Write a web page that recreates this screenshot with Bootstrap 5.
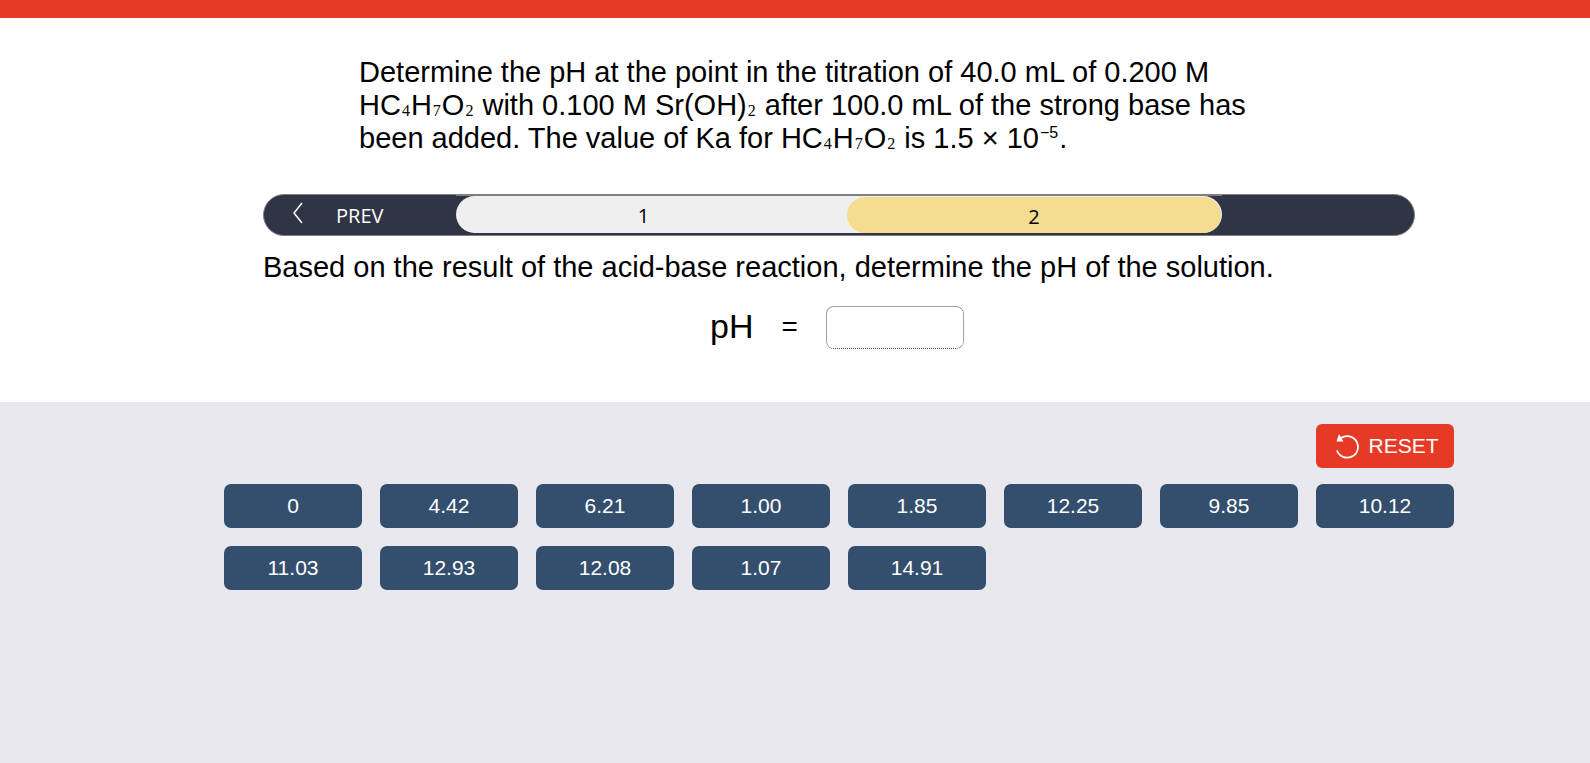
<!DOCTYPE html>
<html lang="en">
<head>
<meta charset="utf-8">
<meta name="viewport" content="width=device-width, initial-scale=1">
<title>Titration pH</title>
<link href="https://cdn.jsdelivr.net/npm/bootstrap@5.3.0/dist/css/bootstrap.min.css" rel="stylesheet">
<style>
body { font-family: "Liberation Sans", Arial, sans-serif; color: #000; background: #fff; }
.top-strip { height: 18px; background: #e63a27; }
.shifted { padding-left: 88px; }
.step-area { max-width: 1152px; }
.question { font-size: 29px; line-height: 33px; padding: 38px 140px 0 96px; margin-bottom: 39px; }
.question sub { font-family: "Liberation Serif", serif; font-size: 16px; line-height: 0; bottom: -1px; padding: 0 1px; }
.question sup { font-size: 16px; line-height: 0; top: -10px; padding: 0 1px; }
.stepper { height: 42px; border: 1px solid #808080; border-radius: 21px; background: #303545; font: 20px "Open Sans", sans-serif; overflow: hidden; }
.stepper button { border: 0; padding: 2px 0 0; font: inherit; background: none; }
.stepper .prev-step { flex: 0 0 192px; padding-top: 4px; color: #fff; text-align: left; }
.prev-step svg { margin: 0 32px 8px 28px; }
.track { flex: 0 0 766px; height: 40px; padding-bottom: 2px; border-top: 1px solid #808080; background: #303545; }
.track-fill { background: #efefef; border-radius: 19px; }
.stepper .step-one { padding-right: 16px; }
.stepper .step-two { flex: 0 0 374px; margin: 1px 1px 0 0; border-radius: 19px; background: #f5dd90; }
.prompt { font-size: 29px; line-height: 33px; margin: 15px 0 22px; }
.equation { gap: 28px; font-size: 34px; line-height: 41px; margin-bottom: 53px; padding-right: 4px; }
.equation label, .equals { padding-bottom: 2px; }
.equals { font-size: 28px; }
.answer { width: 138px; height: 43px; border: 1px dotted #344e6e; border-radius: 8px; font-size: 22px; text-align: center; }
.answer { border-top: 1px solid #95a5ba; border-left: 1px solid #95a5ba; }
.tray { background: #e9e8ee; padding-top: 22px; padding-bottom: 22px; }
.tile-grid { width: 1230px; max-width: 100%; display: grid; grid-template-columns: repeat(auto-fill, 138px); column-gap: 18px; row-gap: 18px; }
.tile-grid .btn { height: 44px; border: 0; border-radius: 7px; padding: 0; color: #fff; background: #344e6e; font-size: 21px; line-height: 44px; }
.tile-grid .reset { grid-column: -2; margin-bottom: -2px; padding-left: 3px; background: #e63a27; border-radius: 6px; }
</style>
<script src="https://cdn.jsdelivr.net/npm/bootstrap@5.3.0/dist/js/bootstrap.bundle.min.js"></script>
</head>
<body class="d-flex flex-column min-vh-100">
<header class="top-strip"></header>
<main class="d-flex flex-column flex-grow-1">
  <section class="shifted">
    <div class="step-area mx-auto">
      <p class="question">Determine the pH at the point in the titration of 40.0 mL of 0.200 M HC<sub>4</sub>H<sub>7</sub>O<sub>2</sub> with 0.100 M Sr(OH)<sub>2</sub> after 100.0 mL of the strong base has been added. The value of Ka for HC<sub>4</sub>H<sub>7</sub>O<sub>2</sub> is 1.5 × 10<sup>−5</sup>.</p>
      <nav class="stepper d-flex" aria-label="Steps">
        <button type="button" class="prev-step"><svg width="12" height="22" viewBox="0 0 12 22" fill="none" stroke="#fff" stroke-width="1.5" aria-hidden="true"><path d="M10 1 2 11l8 10"/></svg>PREV</button>
        <div class="track">
          <div class="track-fill d-flex h-100">
            <button type="button" class="step-one flex-grow-1">1</button>
            <button type="button" class="step-two" aria-current="step">2</button>
          </div>
        </div>
      </nav>
      <p class="prompt">Based on the result of the acid-base reaction, determine the pH of the solution.</p>
      <div class="equation d-flex justify-content-center align-items-center">
        <label for="ph">pH</label><span class="equals">=</span>
        <input id="ph" class="answer" type="text" autocomplete="off">
      </div>
    </div>
  </section>
  <section class="tray shifted flex-grow-1">
    <div class="tile-grid mx-auto">
      <button type="button" class="btn reset d-flex align-items-center justify-content-center"><svg class="me-2" width="26" height="26" viewBox="0 0 26 26" fill="none" stroke="#fff" stroke-width="1.8" aria-hidden="true"><path d="M3 17.500A10.800 10.800 0 1 0 7 5"/><path d="M5 1 2.500 8.500 9.500 8.500Z" fill="#fff" stroke="none"/></svg>RESET</button>
      <button type="button" class="btn" style="grid-column-start:1">0</button>
      <button type="button" class="btn">4.42</button>
      <button type="button" class="btn">6.21</button>
      <button type="button" class="btn">1.00</button>
      <button type="button" class="btn">1.85</button>
      <button type="button" class="btn">12.25</button>
      <button type="button" class="btn">9.85</button>
      <button type="button" class="btn">10.12</button>
      <button type="button" class="btn">11.03</button>
      <button type="button" class="btn">12.93</button>
      <button type="button" class="btn">12.08</button>
      <button type="button" class="btn">1.07</button>
      <button type="button" class="btn">14.91</button>
    </div>
  </section>
</main>
</body>
</html>
